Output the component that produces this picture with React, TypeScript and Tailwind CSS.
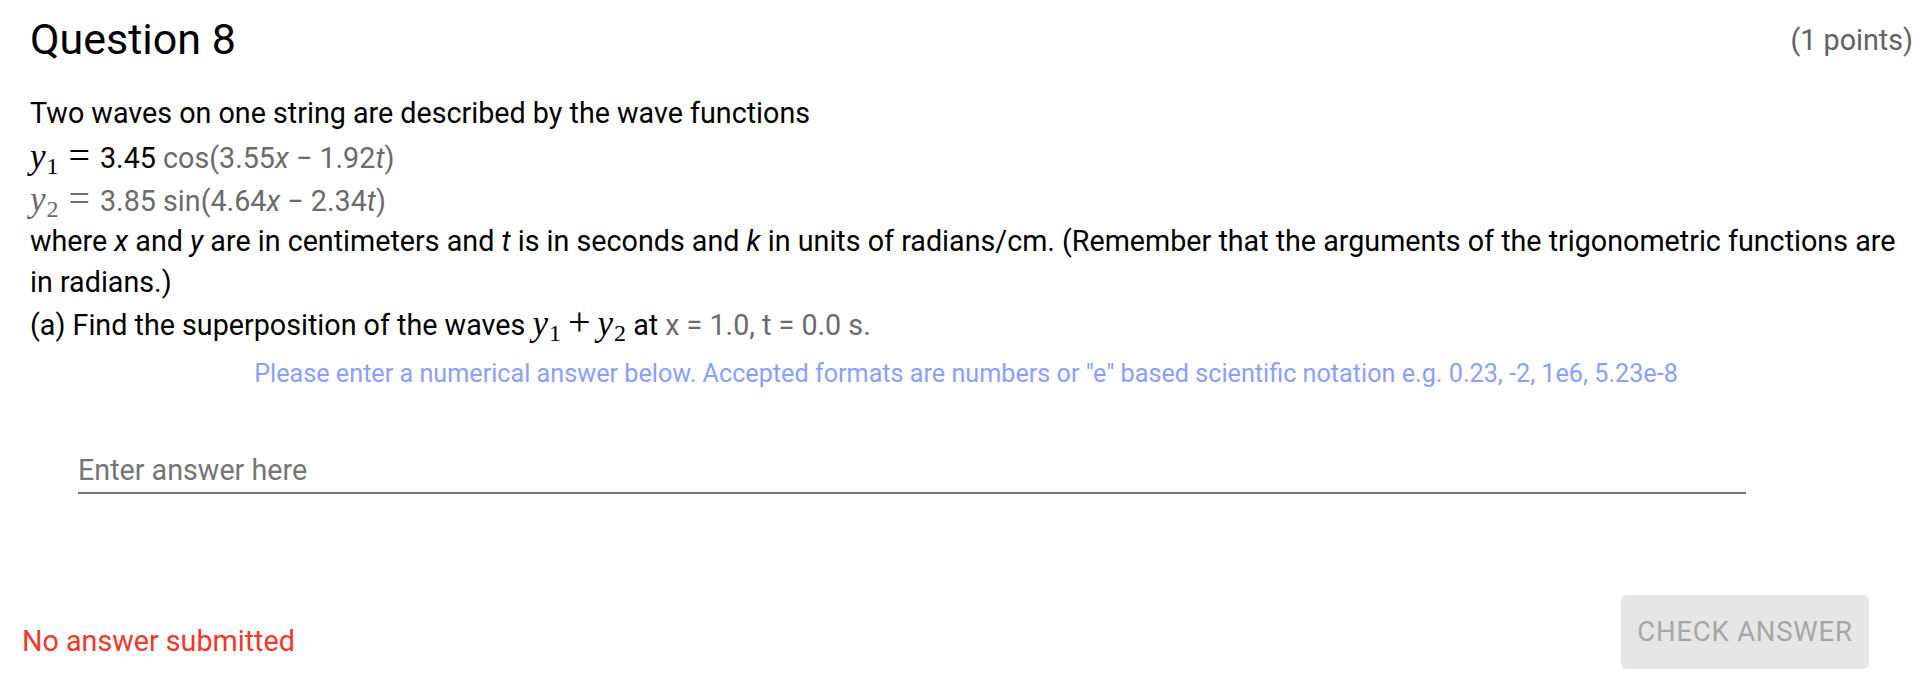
import React from 'react';

const MathVar = ({ sub, gray }: { sub: string; gray?: boolean }) => (
  <span className={`font-['Liberation_Serif',serif] text-[35px] ${gray ? 'text-[#6b6b6b]' : 'text-black'}`}>
    <span className="italic">y</span>
    <span className="text-[24px] relative top-[6px] ml-[1px]">{sub}</span>
  </span>
);

const Eq = ({ gray }: { gray?: boolean }) => (
  <span className={`font-['Liberation_Serif',serif] text-[38px] mx-[10px] ${gray ? 'text-[#6b6b6b]' : 'text-black'}`}>=</span>
);

export default function App() {
  return (
    <div className="w-[1932px] h-[682px] bg-white font-['Roboto','Liberation_Sans',sans-serif] flex flex-col overflow-hidden">
      {/* header */}
      <div className="flex items-start justify-between pl-[30px] pr-[19px] pt-[14px]">
        <h2 className="text-[43px] leading-[50px] text-black">Question 8</h2>
        <span className="text-[28.7px] leading-[40px] text-[#616161] mt-[6px]">(1 points)</span>
      </div>

      {/* body */}
      <div className="pl-[30px] pr-[19px] mt-[29px] text-[28.7px] text-black">
        <div className="leading-[41px] h-[42px]">Two waves on one string are described by the wave functions</div>
        <div className="leading-[41px] h-[44px] whitespace-nowrap">
          <MathVar sub="1" />
          <Eq />
          <span>3.45</span>
          <span className="text-[#6b6b6b]"> cos(3.55<i>x</i> − 1.92<i>t</i>)</span>
        </div>
        <div className="leading-[39px] h-[36px] whitespace-nowrap text-[#6b6b6b]">
          <MathVar sub="2" gray />
          <Eq gray />
          <span>3.85 sin(4.64<i>x</i> − 2.34<i>t</i>)</span>
        </div>
        <div className="leading-[41px] mt-[6px]">
          where <i>x</i> and <i>y</i> are in centimeters and <i>t</i> is in seconds and <i>k</i> in units of radians/cm. (Remember that
          the arguments of the trigonometric functions are in radians.)
        </div>
        <div className="leading-[41px] whitespace-nowrap">
          (a) Find the superposition of the waves <MathVar sub="1" />
          <span className="font-['Liberation_Serif',serif] text-[40px] leading-[30px] mx-[7px]">+</span>
          <MathVar sub="2" /> at <span className="text-[#6b6b6b]">x = 1.0, t = 0.0 s.</span>
        </div>
      </div>

      {/* hint */}
      <div className="mt-[10px] text-center text-[25.2px] leading-[32px] text-[#8c9eff]">
        Please enter a numerical answer below. Accepted formats are numbers or "e" based scientific notation e.g. 0.23, -2, 1e6,
        5.23e-8
      </div>

      {/* answer input */}
      <div className="pl-[78px] w-[1746px] mt-[60px]">
        <input
          placeholder="Enter answer here"
          className="w-full text-[28.7px] leading-[40px] pb-[2px] text-black placeholder:text-[#757575] border-b-2 border-[#757575] outline-none bg-transparent"
        />
      </div>

      {/* footer */}
      <div className="mt-auto flex items-center justify-between pl-[22px] pr-[63px] pb-[13px]">
        <span className="text-[28.7px] leading-[40px] text-[#f2372b] mt-[17px]">No answer submitted</span>
        <button
          disabled
          className="w-[248px] h-[74px] rounded-[6px] bg-[#e6e6e6] text-[#a6a6a6] text-[27.5px] tracking-[0.78px] uppercase"
        >
          Check answer
        </button>
      </div>
    </div>
  );
}
